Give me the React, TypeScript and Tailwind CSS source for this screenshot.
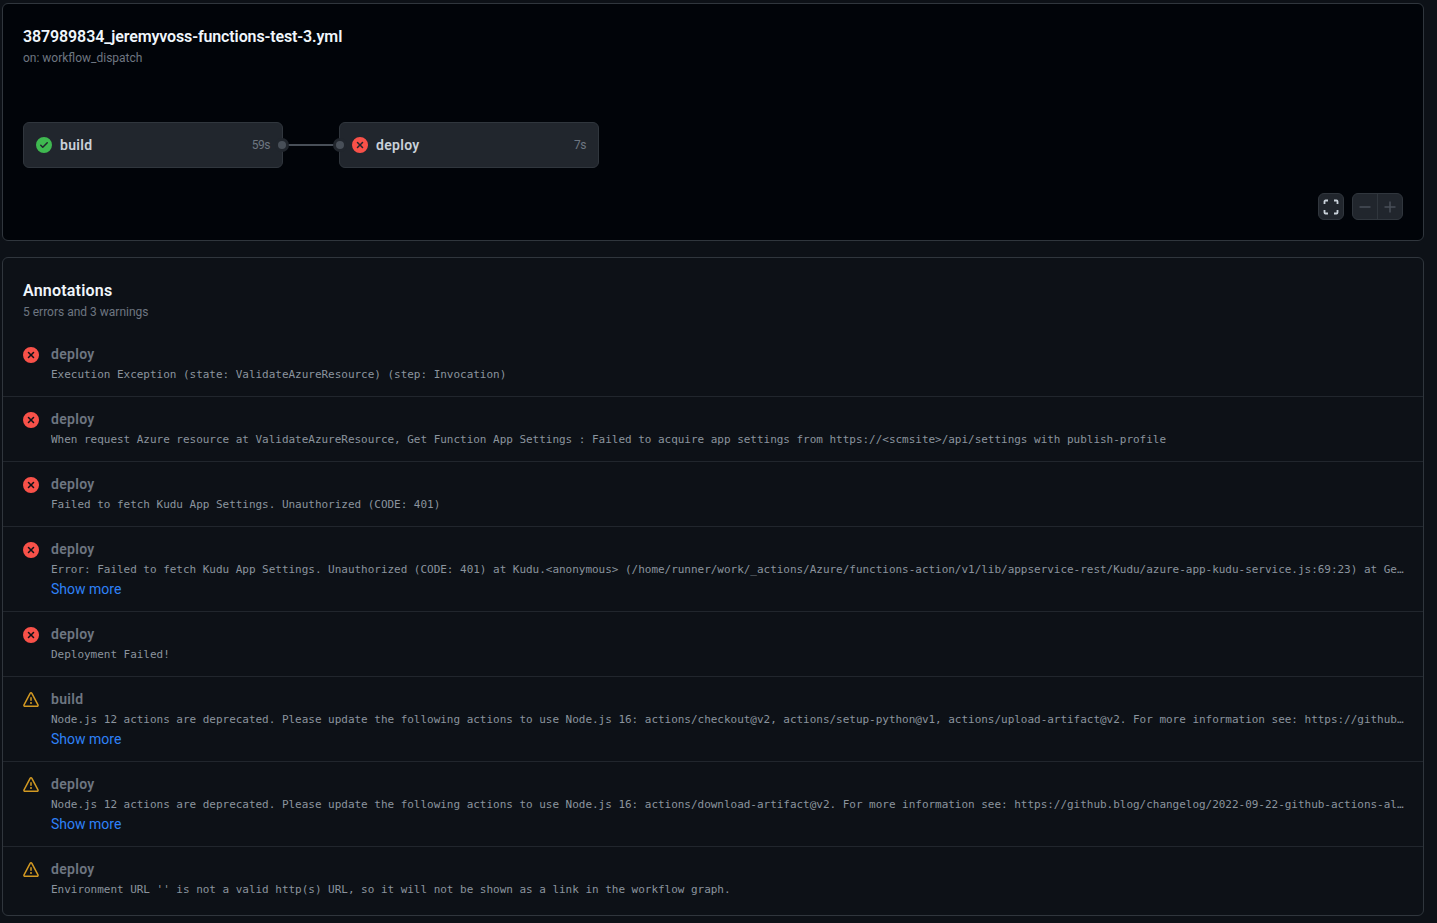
import React from "react";

const X = "M2.343 13.657A8 8 0 1 1 13.658 2.343 8 8 0 0 1 2.343 13.657ZM6.03 4.97a.751.751 0 0 0-1.042.018.751.751 0 0 0-.018 1.042L6.94 8 4.97 9.97a.749.749 0 0 0 .326 1.275.749.749 0 0 0 .734-.215L8 9.06l1.97 1.97a.749.749 0 0 0 1.275-.326.749.749 0 0 0-.215-.734L9.06 8l1.97-1.97a.749.749 0 0 0-.326-1.275.749.749 0 0 0-.734.215L8 6.94Z";
const CHECK = "M8 16A8 8 0 1 1 8 0a8 8 0 0 1 0 16Zm3.78-9.72a.751.751 0 0 0-.018-1.042.751.751 0 0 0-1.042-.018L6.75 9.19 5.28 7.72a.751.751 0 0 0-1.042.018.751.751 0 0 0-.018 1.042l2 2a.75.75 0 0 0 1.06 0Z";
const ALERT = "M6.457 1.047c.659-1.234 2.427-1.234 3.086 0l6.082 11.378A1.75 1.75 0 0 1 14.082 15H1.918a1.75 1.75 0 0 1-1.543-2.575Zm1.763.707a.25.25 0 0 0-.44 0L1.698 13.132a.25.25 0 0 0 .22.368h12.164a.25.25 0 0 0 .22-.368Zm.53 3.996v2.5a.75.75 0 0 1-1.5 0v-2.5a.75.75 0 0 1 1.5 0ZM9 11a1 1 0 1 1-2 0 1 1 0 0 1 2 0Z";

function Oct({ d, className }: { d: string; className: string }) {
  return (
    <svg viewBox="0 0 16 16" width="16" height="16" fill="currentColor" className={className}>
      <path d={d} />
    </svg>
  );
}

type Row = { kind: "error" | "warn"; job: string; msg: string; more?: boolean };

const rows: Row[] = [
  { kind: "error", job: "deploy", msg: "Execution Exception (state: ValidateAzureResource) (step: Invocation)" },
  { kind: "error", job: "deploy", msg: "When request Azure resource at ValidateAzureResource, Get Function App Settings : Failed to acquire app settings from https://<scmsite>/api/settings with publish-profile" },
  { kind: "error", job: "deploy", msg: "Failed to fetch Kudu App Settings. Unauthorized (CODE: 401)" },
  { kind: "error", job: "deploy", more: true, msg: "Error: Failed to fetch Kudu App Settings. Unauthorized (CODE: 401) at Kudu.<anonymous> (/home/runner/work/_actions/Azure/functions-action/v1/lib/appservice-rest/Kudu/azure-app-kudu-service.js:69:23) at Generator.next (<anonymous>)" },
  { kind: "error", job: "deploy", msg: "Deployment Failed!" },
  { kind: "warn", job: "build", more: true, msg: "Node.js 12 actions are deprecated. Please update the following actions to use Node.js 16: actions/checkout@v2, actions/setup-python@v1, actions/upload-artifact@v2. For more information see: https://github.blog/changelog/2022-09-22-github-actions-all-actions-will-begin-running-on-node16-instead-of-node12/." },
  { kind: "warn", job: "deploy", more: true, msg: "Node.js 12 actions are deprecated. Please update the following actions to use Node.js 16: actions/download-artifact@v2. For more information see: https://github.blog/changelog/2022-09-22-github-actions-all-actions-will-begin-running-on-node16-instead-of-node12/." },
  { kind: "warn", job: "deploy", msg: "Environment URL '' is not a valid http(s) URL, so it will not be shown as a link in the workflow graph." },
];

function Node({ icon, iconColor, name, time, dot }: { icon: string; iconColor: string; name: string; time: string; dot: "left" | "right" }) {
  return (
    <div className="relative flex h-[46px] w-[260px] items-center rounded-md border border-[#30363d] bg-[#21262d] pl-3 pr-3">
      <Oct d={icon} className={iconColor} />
      <span className="ml-2 text-[14px] font-semibold tracking-[0.3px] text-[#c9d1d9]">{name}</span>
      <span className="ml-auto text-[12px] tracking-[-0.5px] text-[#6e7681]">{time}</span>
      <span className={dot === "right"
        ? "absolute -right-[7px] top-[15px] flex h-[14px] w-[14px] items-center justify-center rounded-full bg-[#21262d]"
        : "absolute -left-[7px] top-[15px] flex h-[14px] w-[14px] items-center justify-center rounded-full bg-[#21262d]"}>
        <span className="h-2 w-2 rounded-full bg-[#484f58]" />
      </span>
    </div>
  );
}

export default function App() {
  return (
    <div className="min-h-[923px] bg-[#0d1117] pl-[2px] pr-[13px] pt-[3px] [font-family:Roboto,sans-serif]">
      <section className="flex h-[238px] flex-col rounded-md border border-[#30363d] bg-[#010409] px-5 pb-5 pt-[21px]">
        <h2 className="text-[16px] font-semibold leading-6 tracking-[-0.12px] text-[#f0f6fc]">387989834_jeremyvoss-functions-test-3.yml</h2>
        <p className="text-[12px] leading-[18px] text-[#6e7681]">on: workflow_dispatch</p>
        <div className="mt-[55px] flex items-center">
          <Node icon={CHECK} iconColor="text-[#3fb950]" name="build" time="59s" dot="right" />
          <div className="h-[2px] w-[56px] bg-[#484f58]" />
          <Node icon={X} iconColor="text-[#f85149]" name="deploy" time="7s" dot="left" />
        </div>
        <div className="mt-auto flex items-center justify-end gap-2">
          <button className="flex h-[27px] w-[26px] items-center justify-center rounded-md border border-[#30363d] bg-[#21262d] text-[#c9d1d9]">
            <svg viewBox="0 0 16 16" width="16" height="16" fill="none" stroke="currentColor" strokeWidth="1.8">
              <path d="M1.5 5V2.5a1 1 0 0 1 1-1H5M11 1.5h2.5a1 1 0 0 1 1 1V5M14.5 11v2.5a1 1 0 0 1-1 1H11M5 14.5H2.5a1 1 0 0 1-1-1V11" />
            </svg>
          </button>
          <div className="flex h-[27px] w-[51px] items-center rounded-md border border-[#30363d] bg-[#21262d] text-[#484f58]">
            <span className="flex h-full flex-1 items-center justify-center border-r border-[#30363d]">
              <svg viewBox="0 0 16 16" width="16" height="16" fill="none" stroke="currentColor" strokeWidth="1.5"><path d="M2.5 8h11" /></svg>
            </span>
            <span className="flex h-full flex-1 items-center justify-center">
              <svg viewBox="0 0 16 16" width="16" height="16" fill="none" stroke="currentColor" strokeWidth="1.5"><path d="M2.5 8h11M8 2.5v11" /></svg>
            </span>
          </div>
        </div>
      </section>

      <section className="mt-4 rounded-md border border-[#30363d] bg-[#0d1117]">
        <div className="px-5 pb-[11px] pt-[21px]">
          <h2 className="text-[16px] font-semibold leading-6 tracking-[0.2px] text-[#f0f6fc]">Annotations</h2>
          <p className="text-[12px] leading-[18px] text-[#6e7681]">5 errors and 3 warnings</p>
        </div>
        {rows.map((r, i) => (
          <div key={i} className={i < rows.length - 1 ? "flex border-b border-[#21262d] pb-[11px] pl-5 pr-[18px] pt-[12px]" : "flex pb-[15px] pl-5 pr-[18px] pt-[12px]"}>
            <Oct d={r.kind === "error" ? X : ALERT} className={r.kind === "error" ? "mt-[3px] shrink-0 text-[#f85149]" : "mt-[3px] shrink-0 text-[#d29922]"} />
            <div className="ml-3 min-w-0 flex-1">
              <div className="text-[14px] font-semibold leading-5 tracking-[0.3px] text-[#6e7681]">{r.job}</div>
              <div className="mt-[1px] truncate text-[11px] leading-5 tracking-[-0.025px] text-[#8b949e] [font-family:'DejaVu_Sans_Mono',monospace]">{r.msg}</div>
              {r.more && <div className="-mt-[1px] mb-[1px] text-[14px] leading-5 text-[#2f81f7]">Show more</div>}
            </div>
          </div>
        ))}
      </section>
    </div>
  );
}
